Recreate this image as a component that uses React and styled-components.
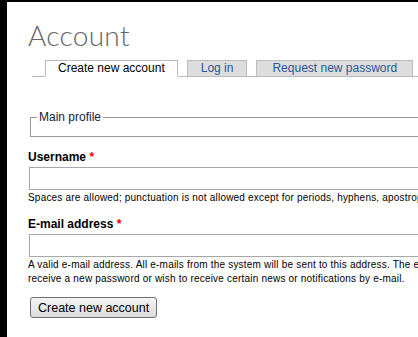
import styled, { createGlobalStyle } from "styled-components"

const Global = createGlobalStyle`
    html, body {
        margin: 0;
        padding: 0;
        background: #000000;
        overflow: hidden;
        height: 100%;
    }
    #root {
        height: 100%;
    }
`

export default function App(){
    const tabs = [
        { label: "Create new account", active: true },
        { label: "Log in" },
        { label: "Request new password", wide: true }
    ]

    return(
        <>
            <Global />
            <Page>
                <Title>Account</Title>

                <Tabs>
                    {tabs.map((tab) => (
                        <Tab key={tab.label} $active={tab.active} $wide={tab.wide}>{tab.label}</Tab>
                    ))}
                </Tabs>

                <Profile>
                    <Legend>Main profile</Legend>
                </Profile>

                <Field $gap={13}>
                    <Label>Username <Required>*</Required></Label>
                    <Input type="text" />
                    <Description>
                        Spaces are allowed; punctuation is not allowed except for periods, hyphens, apostrophes, and underscores.
                    </Description>
                </Field>

                <Field $gap={12}>
                    <Label>E-mail address <Required>*</Required></Label>
                    <Input type="text" />
                    <Description>
                        A valid e-mail address. All e-mails from the system will be sent to this address. The e-mail address is not made public and will only be used if you wish to<br />
                        receive a new password or wish to receive certain news or notifications by e-mail.
                    </Description>
                </Field>

                <Submit>Create new account</Submit>
            </Page>
        </>
    )
}

const Page = styled.div`
    margin: 2px 0 0 7px;
    height: calc(100% - 2px);
    width: 900px;
    background: #FFFFFF;
    box-sizing: border-box;
    padding: 17px 0 0 21px;
    font-family: "Liberation Sans", Arial, sans-serif;
    color: #000000;
`

const Title = styled.h1`
    margin: 0;
    font-family: Lato, "DejaVu Sans", sans-serif;
    font-weight: 300;
    font-size: 28px;
    line-height: 32px;
    color: #666666;
    letter-spacing: 0.3px;
`

const Tabs = styled.ul`
    display: flex;
    gap: 9px;
    list-style: none;
    margin: 9px 0 0 4px;
    padding: 0 0 0 13px;
    border-bottom: 1px solid #BBBBBB;
    height: 16px;
`

const Tab = styled.li`
    height: 15px;
    line-height: 15px;
    font-size: 12px;
    padding: 0 ${(p) => p.$active ? "12px" : p.$wide ? "15px" : "13px"};
    border: 1px solid #BBBBBB;
    border-bottom-color: ${(p) => p.$active ? "#FFFFFF" : "#BBBBBB"};
    background: ${(p) => p.$active ? "#FFFFFF" : "#DDDDDD"};
    color: ${(p) => p.$active ? "#000000" : "#27589A"};
    white-space: nowrap;
`

const Profile = styled.fieldset`
    margin: 33px 0 0 2px;
    padding: 0 0 11px 6px;
    border: 1px solid #999999;
    min-width: 0;
`

const Legend = styled.legend`
    padding: 0 2px;
    font-size: 12px;
    line-height: 15px;
    color: #1a1a3a;
`

const Field = styled.div`
    margin-top: ${(p) => p.$gap}px;
    display: flex;
    flex-direction: column;
    align-items: flex-start;
`

const Label = styled.label`
    font-size: 12px;
    font-weight: bold;
    line-height: 15px;
    margin-bottom: 2px;
`

const Required = styled.span`
    color: #EE0000;
`

const Input = styled.input`
    width: 800px;
    height: 23px;
    box-sizing: border-box;
    margin: 0 0 0 1px;
    border: 1px solid #A8A8A8;
    padding: 2px 4px;
    background: #FFFFFF;
`

const Description = styled.div`
    margin-top: 1px;
    font-size: 10px;
    line-height: 14px;
    letter-spacing: 0.2px;
    white-space: nowrap;
`

const Submit = styled.button`
    margin: 11px 0 0 2px;
    height: 21px;
    padding: 0 7px;
    font-family: "Liberation Sans", Arial, sans-serif;
    font-size: 12.5px;
    color: #000000;
    border: 1px solid #707070;
    border-radius: 3px;
    background: linear-gradient(#F4F4F4, #DCDCDC);
`
